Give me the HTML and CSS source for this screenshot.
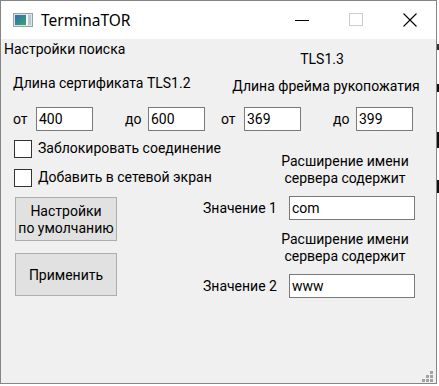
FILE: index.html
```html
<!DOCTYPE html>
<html>
<head>
<meta charset="utf-8">
<title>TerminaTOR</title>
<link rel="stylesheet" href="styles.css">
</head>
<body>
<div class="window">
  <div class="titlebar">
    <svg class="app-icon" width="20" height="14" viewBox="0 0 20 14">
      <defs>
        <linearGradient id="ig" x1="0" y1="0" x2="1" y2="1">
          <stop offset="0" stop-color="#2d6db3"/>
          <stop offset="1" stop-color="#3ea56a"/>
        </linearGradient>
      </defs>
      <rect x="0.5" y="0.5" width="19" height="13" fill="#dde4e8" stroke="#98a2a8"/>
      <rect x="2" y="2" width="11" height="10" fill="url(#ig)"/>
      <rect x="13" y="2" width="2" height="10" fill="#f7f9fa"/>
      <rect x="15" y="2" width="3" height="10" fill="#b9c8d2"/>
    </svg>
    <span class="title">TerminaTOR</span>
    <div class="controls">
      <span class="ctl"><svg width="14" height="14" viewBox="0 0 14 14"><line x1="0" y1="7.5" x2="14" y2="7.5" stroke="#000" stroke-width="1"/></svg></span>
      <span class="ctl"><svg width="14" height="14" viewBox="0 0 14 14"><rect x="0.5" y="0.5" width="13" height="12" fill="none" stroke="#cccccc" stroke-width="1"/></svg></span>
      <span class="ctl close"><svg width="14" height="14" viewBox="0 0 14 14"><path d="M0.5 0.5 L13.5 13.5 M13.5 0.5 L0.5 13.5" stroke="#000" stroke-width="1.1" fill="none"/></svg></span>
    </div>
  </div>
  <div class="client">
    <div class="col left">
      <div class="group-title">Настройки поиска</div>
      <div class="caption cert">Длина сертификата TLS1.2</div>
      <div class="range range-left">
        <span class="lbl">от</span><span class="field">400</span>
        <span class="lbl lbl-to">до</span><span class="field">600</span>
      </div>
      <div class="check check-1"><span class="box"></span><span class="check-text">Заблокировать соединение</span></div>
      <div class="check check-2"><span class="box"></span><span class="check-text">Добавить в сетевой экран</span></div>
      <button class="btn btn-defaults">Настройки<br>по умолчанию</button>
      <button class="btn btn-apply">Применить</button>
    </div>
    <div class="col right">
      <div class="tls">TLS1.3</div>
      <div class="caption frame">Длина фрейма рукопожатия</div>
      <div class="range range-right">
        <span class="lbl">от</span><span class="field">369</span>
        <span class="lbl lbl-to">до</span><span class="field">399</span>
      </div>
      <div class="ext ext-1">Расширение имени<br>сервера содержит</div>
      <div class="value-row">
        <span class="value-lbl">Значение 1</span><span class="field wide">com</span>
      </div>
      <div class="ext ext-2">Расширение имени<br>сервера содержит</div>
      <div class="value-row">
        <span class="value-lbl">Значение 2</span><span class="field wide">www</span>
      </div>
    </div>
  </div>
  <svg class="grip" width="12" height="12" viewBox="0 0 12 12">
    <rect x="8" y="0" width="3" height="3" fill="#a3a3a3"/>
    <rect x="4" y="4" width="3" height="3" fill="#a3a3a3"/>
    <rect x="8" y="4" width="3" height="3" fill="#a3a3a3"/>
    <rect x="0" y="8" width="3" height="3" fill="#a3a3a3"/>
    <rect x="4" y="8" width="3" height="3" fill="#a3a3a3"/>
    <rect x="8" y="8" width="3" height="3" fill="#a3a3a3"/>
  </svg>
</div>
<div class="desktop-edge"></div>
</body>
</html>
```

FILE: styles.css
```css
html, body {
  margin: 0;
  padding: 0;
}

body {
  background: #ffffff;
  font-family: Roboto, "Noto Sans", "DejaVu Sans", sans-serif;
  font-size: 14px;
  line-height: 17px;
  color: #000;
  display: flex;
  align-items: flex-start;
}

.window {
  position: relative;
  flex: none;
  width: 437px;
  height: 384px;
  box-sizing: border-box;
  border: 1px solid #858585;
  background: #f0f0f0;
  display: flex;
  flex-direction: column;
}

.desktop-edge {
  flex: none;
  width: 2px;
  height: 386px;
  background: linear-gradient(to bottom,
    transparent 0, transparent 44px,
    #333 44px, #333 50px,
    transparent 50px, transparent 84px,
    #111 84px, #111 92px,
    transparent 92px, transparent 132px,
    #111 132px, #111 148px,
    transparent 148px, transparent 180px,
    #111 180px, #111 193px,
    transparent 193px);
}

/* title bar */
.titlebar {
  flex: none;
  height: 38px;
  background: #ffffff;
  display: flex;
  align-items: center;
}

.app-icon {
  margin-left: 12px;
  flex: none;
}

.title {
  margin-left: 8px;
  font-family: "Noto Sans", Roboto, sans-serif;
  font-size: 15.5px;
  line-height: 20px;
  color: #000;
}

.controls {
  margin-left: auto;
  display: flex;
  height: 38px;
}

.ctl {
  width: 54px;
  height: 38px;
  display: flex;
  align-items: center;
  justify-content: center;
}

.ctl.close {
  width: 53px;
}

/* client area */
.client {
  flex: 1;
  display: flex;
}

.col {
  display: flex;
  flex-direction: column;
  align-items: flex-start;
}

.left {
  width: 199px;
  flex: none;
}

.right {
  width: 235px;
  flex: none;
}

.group-title {
  margin: 2px 0 0 3px;
  white-space: nowrap;
}

.caption {
  white-space: nowrap;
}

.cert {
  margin: 17px 0 0 12px;
}

.tls {
  margin: 12px 0 0 80px;
  width: 84px;
  text-align: center;
}

.frame {
  margin: 10px 0 0 26px;
  width: 200px;
  text-align: center;
}

/* ranges */
.range {
  display: flex;
  align-items: center;
  height: 24px;
}

.range-left {
  margin: 15px 0 0 12px;
}

.range-right {
  margin: 12px 0 0 21px;
}

.lbl {
  width: 23px;
  flex: none;
}

.lbl-to {
  margin-left: 32px;
}

.field {
  flex: none;
  box-sizing: border-box;
  width: 57px;
  height: 24px;
  border: 1px solid #7a7a7a;
  background: #ffffff;
  padding-left: 2px;
  line-height: 22px;
  white-space: nowrap;
}

.field.wide {
  width: 126px;
}

/* checkboxes */
.check {
  display: flex;
  align-items: flex-start;
  margin-left: 13px;
  white-space: nowrap;
}

.check-1 {
  margin-top: 9px;
}

.check-2 {
  margin-top: 11px;
}

.box {
  flex: none;
  width: 18px;
  height: 18px;
  box-sizing: border-box;
  border: 1px solid #333333;
  background: #ffffff;
  margin-right: 6px;
}

/* buttons */
.btn {
  margin-left: 14px;
  width: 102px;
  box-sizing: border-box;
  background: #e1e1e1;
  border: 1px solid #adadad;
  border-radius: 0;
  padding: 2px 0 0 0;
  font: inherit;
  line-height: 17px;
  color: #000;
  text-align: center;
}

.btn-defaults {
  margin-top: 10px;
  height: 44px;
}

.btn-apply {
  margin-top: 12px;
  height: 43px;
}

/* right side */
.ext {
  margin-left: 75px;
  width: 140px;
  text-align: center;
  white-space: nowrap;
}

.ext-1 {
  margin-top: 22px;
}

.ext-2 {
  margin-top: 11px;
}

.value-row {
  display: grid;
  grid-template-columns: 86px 126px;
  align-items: center;
  margin-top: 9px;
  padding-left: 3px;
  height: 24px;
}

.value-lbl {
  white-space: nowrap;
}

.grip {
  position: absolute;
  left: 421px;
  top: 370px;
}
```
